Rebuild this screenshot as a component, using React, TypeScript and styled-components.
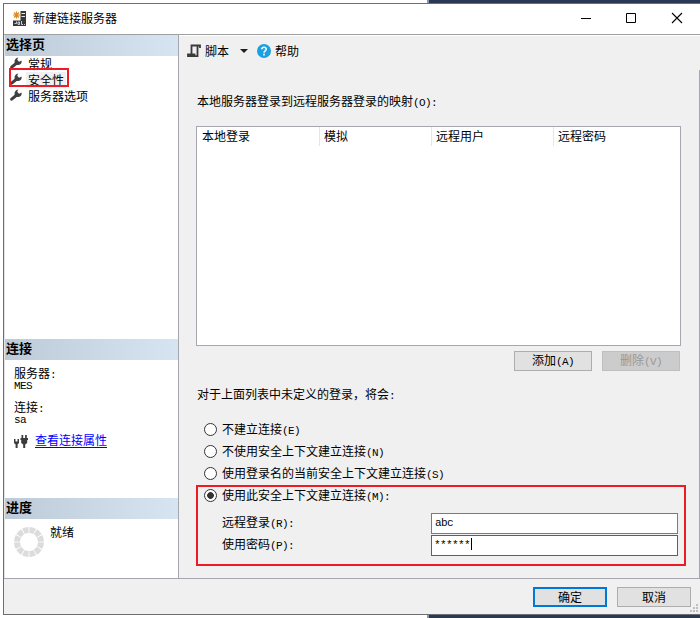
import React from "react";
import styled, { createGlobalStyle } from "styled-components";

const GlobalStyle = createGlobalStyle`
  * { box-sizing: border-box; }
  body {
    margin: 0;
    overflow: hidden;
    background: #fff;
    color: #000;
    font: 12px/16px "Noto Sans CJK SC", sans-serif;
  }
`;

const Screen = styled.div`
  width: 700px;
  height: 618px;
  display: flex;
  flex-direction: column;
`;

const Backdrop = styled.div`
  height: 3px;
  flex: none;
  margin-left: 427px;
  background: #293955;
  border-left: 2px solid #8c93ae;
`;

const Window = styled.div`
  position: relative;
  height: 612px;
  flex: none;
  margin-left: 3px;
  border: 1px solid #6e6e6e;
  border-right: 0;
  background: #f0f0f0;
  display: flex;
  flex-direction: column;
`;

const TitleBar = styled.header`
  height: 31px;
  flex: none;
  display: flex;
  align-items: center;
  background: #fff;
  border-bottom: 1px solid #a0a0a0;
  padding: 0 17px 2px 9px;
`;

const Title = styled.h1`
  flex: 1;
  margin: 0 0 0 6px;
  font-size: 12px;
  line-height: 16px;
  font-weight: 400;
`;

const Controls = styled.div`
  display: flex;
  gap: 33px;
  svg { display: block; }
`;

const Content = styled.div`
  height: 544px;
  flex: none;
  display: flex;
  border-bottom: 1px solid #a6a6ae;
`;

const Sidebar = styled.aside`
  width: 175px;
  flex: none;
  background: #fff;
  border-left: 1px solid #e3e3e3;
  border-right: 1px solid #a6a6ae;
`;

const Section = styled.section<{ $height: number }>`
  height: ${(p) => p.$height}px;
`;

const SectionTitle = styled.h2`
  height: 21px;
  margin: 0;
  padding: 0 1px;
  font-size: 13px;
  line-height: 17px;
  font-weight: 700;
  background: linear-gradient(90deg, #bdcbd9, #d7e4f2);
`;

const PageList = styled.ul`
  list-style: none;
  margin: 0;
  padding: 0 0 0 5px;
`;

const PageItem = styled.li`
  position: relative;
  height: 16px;
  display: flex;
  align-items: center;
  gap: 4px;
  svg { margin-top: -2px; }
`;

const PageName = styled.span<{ $selected?: boolean }>`
  padding: 0 2px;
  background: ${(p) => (p.$selected ? "#f0f0f0" : "transparent")};
`;

const PageMark = styled.div`
  position: absolute;
  left: -1px;
  top: -4px;
  width: 60px;
  height: 19px;
  border: 2px solid #ed1c24;
`;

const ConnectionInfo = styled.div`
  padding: 6px 0 0 9px;
`;

const InfoLabel = styled.div`
  height: 14px;
  line-height: 14px;
`;

const InfoValue = styled.div`
  height: 20px;
  line-height: 8px;
`;

const LinkRow = styled.div`
  display: flex;
  align-items: center;
  gap: 7px;
  height: 18px;
  margin-top: -2px;
`;

const Link = styled.a`
  color: #0000ff;
  text-decoration: underline;
  text-underline-offset: 2px;
  margin-top: -3px;
`;

const ProgressInfo = styled.div`
  display: flex;
  gap: 5px;
  padding: 5px 0 0 8px;
  svg { margin-top: 2px; }
`;

const Latin = styled.span`
  font-family: "Liberation Mono", monospace;
  font-size: 11px;
  letter-spacing: -0.6px;
`;

const Main = styled.main`
  flex: 1;
  min-width: 0;
  display: flex;
  border-top: 1px solid #fff;
`;

const Form = styled.div`
  width: 520px;
  flex: none;
`;

const RightEdge = styled.div`
  width: 1px;
  margin: 34px 0 0 auto;
  background: #a6a6ae;
`;

const Toolbar = styled.div`
  height: 29px;
  display: flex;
  align-items: center;
  padding-left: 8px;
`;

const DropArrow = styled.svg`
  margin: 0 9px 0 11px;
`;

const ToolLabel = styled.span`
  margin-left: 4px;
`;

const FormText = styled.p<{ $top: number }>`
  margin: ${(p) => p.$top}px 0 0 18px;
  height: 16px;
`;

const MappingTable = styled.div`
  width: 485px;
  height: 220px;
  margin: 17px 0 0 17px;
  background: #fff;
  border: 1px solid #a6a6ae;
`;

const TableHead = styled.div`
  height: 19px;
  display: grid;
  grid-template-columns: 123px 112px 122px 1fr;
`;

const HeadCell = styled.span`
  padding-left: 5px;
  line-height: 17px;
  border-right: 1px solid #e5e5e5;
  &:not(:first-child) { padding-left: 4px; }
  &:last-child { border-right: 0; }
`;

const ButtonRow = styled.div`
  display: flex;
  justify-content: flex-end;
  gap: 10px;
  margin: 5px 19px 0 0;
`;

const Button = styled.button<{ $width: number; $primary?: boolean }>`
  width: ${(p) => p.$width}px;
  height: 20px;
  padding: 0;
  border: ${(p) => (p.$primary ? "2px solid #0078d7" : "1px solid #adadad")};
  background: #e1e1e1;
  color: #000;
  font: inherit;
  line-height: 16px;
  &:disabled {
    background: #cccccc;
    border-color: #bfbfbf;
    color: #989898;
  }
`;

const RadioList = styled.div`
  margin: 17px 0 0 25px;
`;

const RadioRow = styled.label`
  height: 22px;
  display: flex;
  align-items: center;
  gap: 5px;
`;

const Radio = styled.span<{ $checked?: boolean }>`
  width: 13px;
  height: 13px;
  margin-bottom: 1px;
  border: 1px solid #333;
  border-radius: 50%;
  background: ${(p) =>
    p.$checked ? "radial-gradient(circle, #333 3px, #fff 3.7px)" : "#fff"};
`;

const ContextGroup = styled.div`
  position: relative;
`;

const GroupMark = styled.div`
  position: absolute;
  left: -8px;
  top: 0;
  width: 490px;
  height: 81px;
  border: 2px solid #ed1c24;
`;

const Field = styled.label`
  display: flex;
  height: 22px;
  width: 474px;
  padding-left: 18px;
`;

const Fields = styled.div`
  padding-top: 6px;
`;

const FieldLabel = styled.span`
  width: 209px;
  line-height: 18px;
`;

const TextBox = styled.span<{ $focused?: boolean }>`
  width: 247px;
  height: 21px;
  display: flex;
  background: #fff;
  border: 1px solid ${(p) => (p.$focused ? "#0078d7" : "#7a7a7a")};
  padding-left: ${(p) => (p.$focused ? 2 : 3)}px;
  line-height: 18px;
`;

const Caret = styled.span`
  width: 1px;
  height: 12px;
  margin: 2px 0 0 1px;
  background: #000;
`;

const Footer = styled.footer`
  flex: 1;
  display: flex;
  justify-content: flex-end;
  gap: 10px;
  padding: 8px 9px 0 0;
`;

const Grip = styled.svg`
  position: absolute;
  right: 2px;
  bottom: 2px;
`;

const ServerIcon = () => (
  <svg width="14" height="15" viewBox="0 0 14 15">
    <path d="M7.500 0H13v15H0V9.500h7.500z" fill="#383838" />
    <path d="M8.500 2.500h3.500M8.500 5.500h3.500" stroke="#e8e8e8" />
    <path d="M3.500.5v7M0 4h7.500M1 1.500l5 5M6 1.500l-5 5" stroke="#dc8c1e" strokeWidth="1.200" />
    <path d="M1.500 12.500h2v-2M5 11h1.500v2.500H5zM8.500 10v3.500H10M11 13.500h1" fill="none" stroke="#ddd" strokeWidth=".9" />
  </svg>
);

const Wrench = () => (
  <svg width="12" height="12" viewBox="0 0 12 12">
    <path d="M1.700 10.200L6.800 6" stroke="#404040" strokeWidth="3" strokeLinecap="round" />
    <path d="M8.200.4L7.200 2.800l1.900 1.900L11.600 3.600c.5 2.600-1.500 4.600-4 4.300C5 7.700 3.900 5.100 4.900 2.900 5.500 1.400 6.800.5 8.200.4z" fill="#404040" />
  </svg>
);

const ScriptIcon = () => (
  <svg width="14" height="14" viewBox="0 0 14 14" fill="none" stroke="#3a3a3a" strokeWidth="1.800">
    <path d="M4.500 10V1.500H13V4M10.500 1.500v10.700H1V10.500h6.500v1.700" />
  </svg>
);

const PlugIcon = () => (
  <svg width="14" height="13" viewBox="0 0 14 13">
    <path d="M0 4h1.500v2.500h2V4H5v4L3.600 9.500V13H1.600V9.500L0 8z" fill="#3c3c3c" />
    <path d="M7.500 0h1.700v3h1.900V0h1.700v3H14v2h-.8v3l-2 1.500V13H9.200V9.500L7.200 8V5h-.7V3h1z" fill="#3c3c3c" />
  </svg>
);

const Spinner = () => (
  <svg width="32" height="32" viewBox="0 0 32 32">
    <circle cx="16" cy="16" r="12" fill="none" stroke="#dcdcdc" strokeWidth="6" pathLength="120" strokeDasharray="8.600 1.400" strokeDashoffset="-.7" />
  </svg>
);

const HelpIcon = () => (
  <svg width="14" height="14" viewBox="0 0 14 14">
    <circle cx="7" cy="7" r="7" fill="#1ba1e2" />
    <path d="M4.800 5.300C4.900 2.500 9.200 2.600 9.200 5.200 9.200 6.700 7 6.900 7 8.700M7 9.800v1.700" fill="none" stroke="#fff" strokeWidth="1.600" />
  </svg>
);

const pages = ["常规", "安全性", "服务器选项"];
const columns = ["本地登录", "模拟", "远程用户", "远程密码"];
const options = [
  ["不建立连接", "(E)"],
  ["不使用安全上下文建立连接", "(N)"],
  ["使用登录名的当前安全上下文建立连接", "(S)"],
];

export default function App() {
  return (
    <Screen>
      <GlobalStyle />
      <Backdrop />
      <Window>
        <TitleBar>
          <ServerIcon />
          <Title>新建链接服务器</Title>
          <Controls>
            <svg width="12" height="12"><path d="M0 6.500h10" stroke="#000" /></svg>
            <svg width="12" height="12"><path d="M.5 1.500h9v9h-9z" fill="none" stroke="#000" /></svg>
            <svg width="12" height="12"><path d="M1 1l10 10M11 1L1 11" stroke="#000" strokeWidth="1.1" /></svg>
          </Controls>
        </TitleBar>
        <Content>
          <Sidebar>
            <Section $height={304}>
              <SectionTitle>选择页</SectionTitle>
              <PageList>
                {pages.map((page, i) => (
                  <PageItem key={page}>
                    <Wrench />
                    <PageName $selected={i === 1}>{page}</PageName>
                    {i === 1 && <PageMark />}
                  </PageItem>
                ))}
              </PageList>
            </Section>
            <Section $height={159}>
              <SectionTitle>连接</SectionTitle>
              <ConnectionInfo>
                <InfoLabel>服务器<Latin>:</Latin></InfoLabel>
                <InfoValue><Latin>MES</Latin></InfoValue>
                <InfoLabel>连接<Latin>:</Latin></InfoLabel>
                <InfoValue><Latin>sa</Latin></InfoValue>
                <LinkRow>
                  <PlugIcon />
                  <Link>查看连接属性</Link>
                </LinkRow>
              </ConnectionInfo>
            </Section>
            <Section $height={80}>
              <SectionTitle>进度</SectionTitle>
              <ProgressInfo>
                <Spinner />
                <span>就绪</span>
              </ProgressInfo>
            </Section>
          </Sidebar>
          <Main>
            <Form>
              <Toolbar>
                <ScriptIcon />
                <ToolLabel>脚本</ToolLabel>
                <DropArrow width="8" height="4"><path d="M0 0h8L4 4z" fill="#1e1e1e" /></DropArrow>
                <HelpIcon />
                <ToolLabel>帮助</ToolLabel>
              </Toolbar>
              <FormText $top={28}>本地服务器登录到远程服务器登录的映射<Latin>(O):</Latin></FormText>
              <MappingTable>
                <TableHead>
                  {columns.map((c) => <HeadCell key={c}>{c}</HeadCell>)}
                </TableHead>
              </MappingTable>
              <ButtonRow>
                <Button $width={78}>添加<Latin>(A)</Latin></Button>
                <Button $width={78} disabled>删除<Latin>(V)</Latin></Button>
              </ButtonRow>
              <FormText $top={15}>对于上面列表中未定义的登录，将会<Latin>:</Latin></FormText>
              <RadioList>
                {options.map(([label, key]) => (
                  <RadioRow key={key}>
                    <Radio />
                    <span>{label}<Latin>{key}</Latin></span>
                  </RadioRow>
                ))}
                <ContextGroup>
                  <GroupMark />
                  <RadioRow>
                    <Radio $checked />
                    <span>使用此安全上下文建立连接<Latin>(M):</Latin></span>
                  </RadioRow>
                  <Fields>
                    <Field>
                      <FieldLabel>远程登录<Latin>(R):</Latin></FieldLabel>
                      <TextBox><Latin>abc</Latin></TextBox>
                    </Field>
                    <Field>
                      <FieldLabel>使用密码<Latin>(P):</Latin></FieldLabel>
                      <TextBox $focused><Latin>******</Latin><Caret /></TextBox>
                    </Field>
                  </Fields>
                </ContextGroup>
              </RadioList>
            </Form>
            <RightEdge />
          </Main>
        </Content>
        <Footer>
          <Button $width={74} $primary>确定</Button>
          <Button $width={74}>取消</Button>
        </Footer>
        <Grip width="8" height="8">
          <path d="M6 0h2v2H6zM3 3h2v2H3zM6 3h2v2H6zM0 6h2v2H0zM3 6h2v2H3zM6 6h2v2H6z" fill="#bfbfbf" />
        </Grip>
      </Window>
      <Backdrop />
    </Screen>
  );
}
